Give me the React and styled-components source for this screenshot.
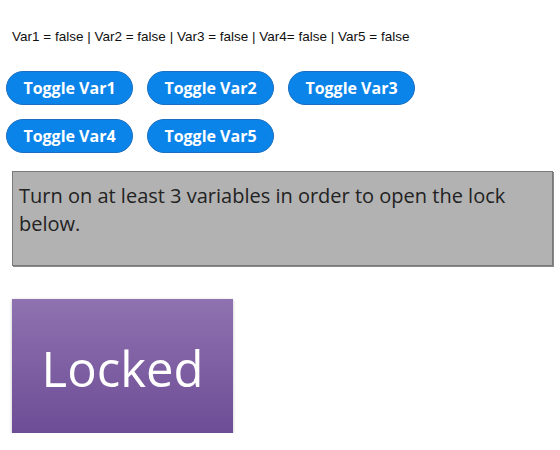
import React, { useState } from "react";
import styled, { createGlobalStyle } from "styled-components";

const Global = createGlobalStyle`
  html, body { margin: 0; padding: 0; background: #fff; }
  body { font-family: "Open Sans", sans-serif; }
`;

const Page = styled.div`
  padding: 29px 7px 0 6px;
  display: flex;
  flex-direction: column;
`;

const Status = styled.div`
  font-family: "Liberation Sans", Arial, sans-serif;
  font-size: 13.5px;
  color: #111;
  line-height: 16px;
  padding-left: 6px;
`;

const ButtonGrid = styled.div`
  margin-top: 26px;
  display: flex;
  flex-wrap: wrap;
  gap: 14px 14px;
  width: 420px;
`;

const ToggleButton = styled.button`
  height: 34px;
  width: 127px;
  border-radius: 17px;
  border: 1px solid #1a6fc0;
  background: #0b84ea;
  color: #fff;
  font-family: "Open Sans", sans-serif;
  font-weight: 700;
  font-size: 16px;
  padding: 0;
  cursor: pointer;
`;

const Message = styled.div`
  margin: 18px 0 0 6px;
  height: 95px;
  background: #b2b2b2;
  border: 1px solid #7a7a7a;
  box-shadow: 1px 1px 0 #888;
  padding: 10px 6px;
  box-sizing: border-box;
  font-size: 20px;
  line-height: 28px;
  color: #222;
`;

const Lock = styled.div`
  margin: 33px 0 0 6px;
  width: 221px;
  height: 134px;
  display: flex;
  align-items: center;
  justify-content: center;
  background: linear-gradient(#8f72b0, #6d4d96);
  box-shadow: 0 1px 3px rgba(0,0,0,0.25);
  color: #fff;
  font-size: 49px;
  padding-top: 4px;
  box-sizing: border-box;
`;

export default function App() {
  const [vars, setVars] = useState([false, false, false, false, false]);
  const toggle = (i) => setVars((v) => v.map((x, j) => (j === i ? !x : x)));
  const count = vars.filter(Boolean).length;
  return (
    <Page>
      <Global />
      <Status>
        Var1 = {String(vars[0])} | Var2 = {String(vars[1])} | Var3 = {String(vars[2])} | Var4= {String(vars[3])} | Var5 = {String(vars[4])}
      </Status>
      <ButtonGrid>
        {vars.map((_, i) => (
          <ToggleButton key={i} onClick={() => toggle(i)}>
            Toggle Var{i + 1}
          </ToggleButton>
        ))}
      </ButtonGrid>
      <Message>Turn on at least 3 variables in order to open the lock below.</Message>
      <Lock>{count >= 3 ? "Unlocked" : "Locked"}</Lock>
    </Page>
  );
}
